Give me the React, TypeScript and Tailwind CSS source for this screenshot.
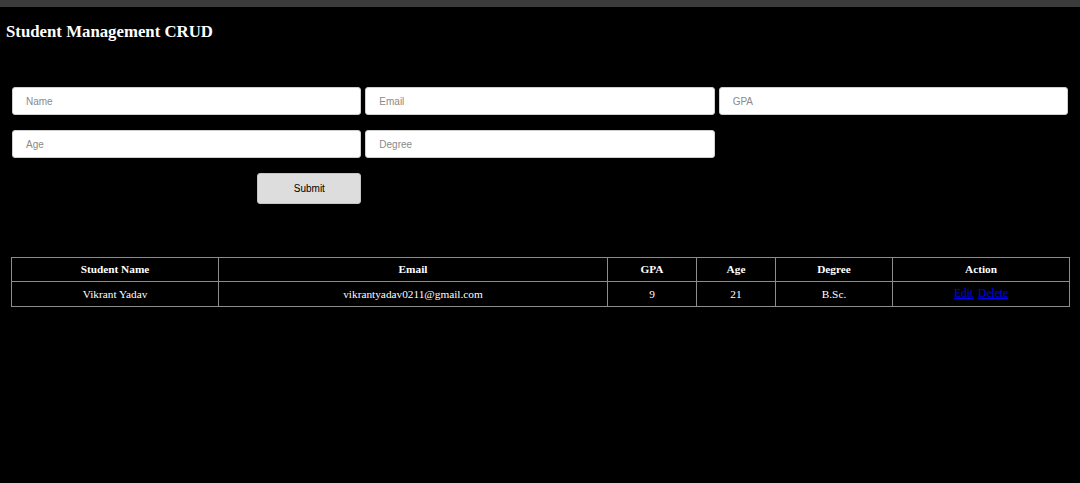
import React from "react";

const serif = { fontFamily: '"Liberation Serif", "Times New Roman", serif' };

export default function App() {
  const inputCls =
    "h-[28px] w-full rounded-[3px] bg-white border border-[#cfcfcf] px-[13px] text-[10px] text-black placeholder:text-[#8a8a8a] outline-none";
  const th = "border border-[#8c8c8c] font-bold text-[11.3px] text-white text-center";
  const td = "border border-[#8c8c8c] text-[11.3px] text-white text-center";
  return (
    <div className="w-[1080px] h-[483px] bg-black overflow-hidden" style={serif}>
      <div className="h-[7px] bg-[#3b3b3c]" />
      <h1 className="text-[16.8px] font-bold text-white pl-[6px] pt-[15px] leading-[19px]">
        Student Management CRUD
      </h1>
      <form
        className="grid grid-cols-3 gap-x-[4px] gap-y-[15px] pl-[12px] pr-[12px] mt-[46px]"
        style={{ fontFamily: '"Liberation Sans", Arial, sans-serif' }}
        onSubmit={(e) => e.preventDefault()}
      >
        <input className={inputCls} placeholder="Name" />
        <input className={inputCls} placeholder="Email" />
        <input className={inputCls} placeholder="GPA" />
        <input className={inputCls} placeholder="Age" />
        <input className={inputCls} placeholder="Degree" />
        <div />
        <div className="flex justify-end">
          <button
            type="submit"
            className="w-[104px] h-[31px] rounded-[3px] bg-[#dddddd] border border-[#c4c4c4] text-[10px] text-black"
          >
            Submit
          </button>
        </div>
      </form>
      <div className="pl-[11px] pr-[11px] mt-[53px]">
        <table className="w-[1058px] table-fixed border-collapse">
          <colgroup>
            <col className="w-[207px]" />
            <col className="w-[389px]" />
            <col className="w-[89px]" />
            <col className="w-[79px]" />
            <col className="w-[117px]" />
            <col className="w-[177px]" />
          </colgroup>
          <thead>
            <tr className="h-[24px]">
              <th className={th}>Student Name</th>
              <th className={th}>Email</th>
              <th className={th}>GPA</th>
              <th className={th}>Age</th>
              <th className={th}>Degree</th>
              <th className={th}>Action</th>
            </tr>
          </thead>
          <tbody>
            <tr className="h-[25px]">
              <td className={td}>Vikrant Yadav</td>
              <td className={td}>vikrantyadav0211@gmail.com</td>
              <td className={td}>9</td>
              <td className={td}>21</td>
              <td className={td}>B.Sc.</td>
              <td className={td}>
                <a href="#" className="text-[#0000ee] underline text-[11.5px] mr-[5px]">Edit</a>
                <a href="#" className="text-[#0000ee] underline text-[11.5px]">Delete</a>
              </td>
            </tr>
          </tbody>
        </table>
      </div>
    </div>
  );
}
